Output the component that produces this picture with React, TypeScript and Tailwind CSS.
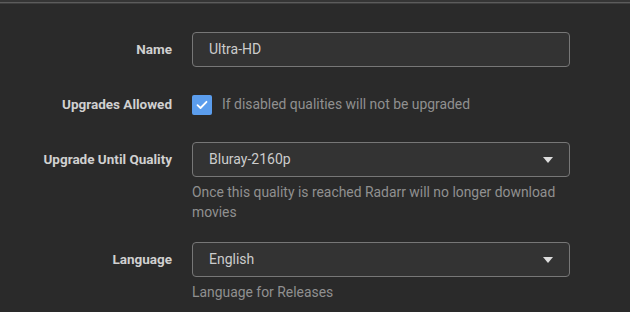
const font = { fontFamily: "Roboto, 'Noto Sans', sans-serif" };

function Label({ children }: { children: React.ReactNode }) {
  return (
    <div className="w-[172px] shrink-0 h-[35px] flex items-center justify-end text-[13.5px] font-bold text-[#d0d0d0]">
      {children}
    </div>
  );
}

function Caret() {
  return (
    <svg width="10" height="6" viewBox="0 0 10 6" className="shrink-0">
      <path d="M0 0 H10 L5 6 Z" fill="#ddd" />
    </svg>
  );
}

function SelectBox({ value }: { value: string }) {
  return (
    <div className="h-[35px] w-[378px] rounded-[4px] border border-[#777] bg-[#333] flex items-center justify-between pl-4 pr-4 text-[14px] text-[#ccc]">
      <span>{value}</span>
      <Caret />
    </div>
  );
}

function HelpText({ children }: { children: React.ReactNode }) {
  return <div className="pt-[5px] w-[378px] text-[13.9px] leading-5 text-[#909090]">{children}</div>;
}

export default function App() {
  return (
    <div className="w-[630px] h-[312px] bg-[#2a2a2a] overflow-hidden" style={font}>
      <div className="h-[2px] bg-[#353535]" />
      <div className="h-px bg-[#5c5c5c]" />
      <div className="h-px bg-[#3e3e3e]" />
      <div className="pt-[28px] flex flex-col">
        <div className="flex gap-5 mb-5">
          <Label>Name</Label>
          <div className="h-[35px] w-[378px] rounded-[4px] border border-[#777] bg-[#333] flex items-center pl-4 text-[14px] text-[#ccc]">
            Ultra-HD
          </div>
        </div>
        <div className="flex gap-5 mb-5">
          <Label>Upgrades Allowed</Label>
          <div className="h-[35px] flex items-center gap-[10px]">
            <div className="w-5 h-5 rounded-[2px] bg-[#5b9ded] flex items-center justify-center">
              <svg width="12" height="10" viewBox="0 0 12 10">
                <path d="M1.5 5.2 L4.5 8 L10.5 1.8" stroke="#fff" strokeWidth="1.8" fill="none" strokeLinecap="round" strokeLinejoin="round" />
              </svg>
            </div>
            <span className="text-[13.9px] text-[#909090]">If disabled qualities will not be upgraded</span>
          </div>
        </div>
        <div className="flex gap-5 mb-5">
          <Label>Upgrade Until Quality</Label>
          <div>
            <SelectBox value="Bluray-2160p" />
            <HelpText>Once this quality is reached Radarr will no longer download movies</HelpText>
          </div>
        </div>
        <div className="flex gap-5">
          <Label>Language</Label>
          <div>
            <SelectBox value="English" />
            <HelpText>Language for Releases</HelpText>
          </div>
        </div>
      </div>
    </div>
  );
}
